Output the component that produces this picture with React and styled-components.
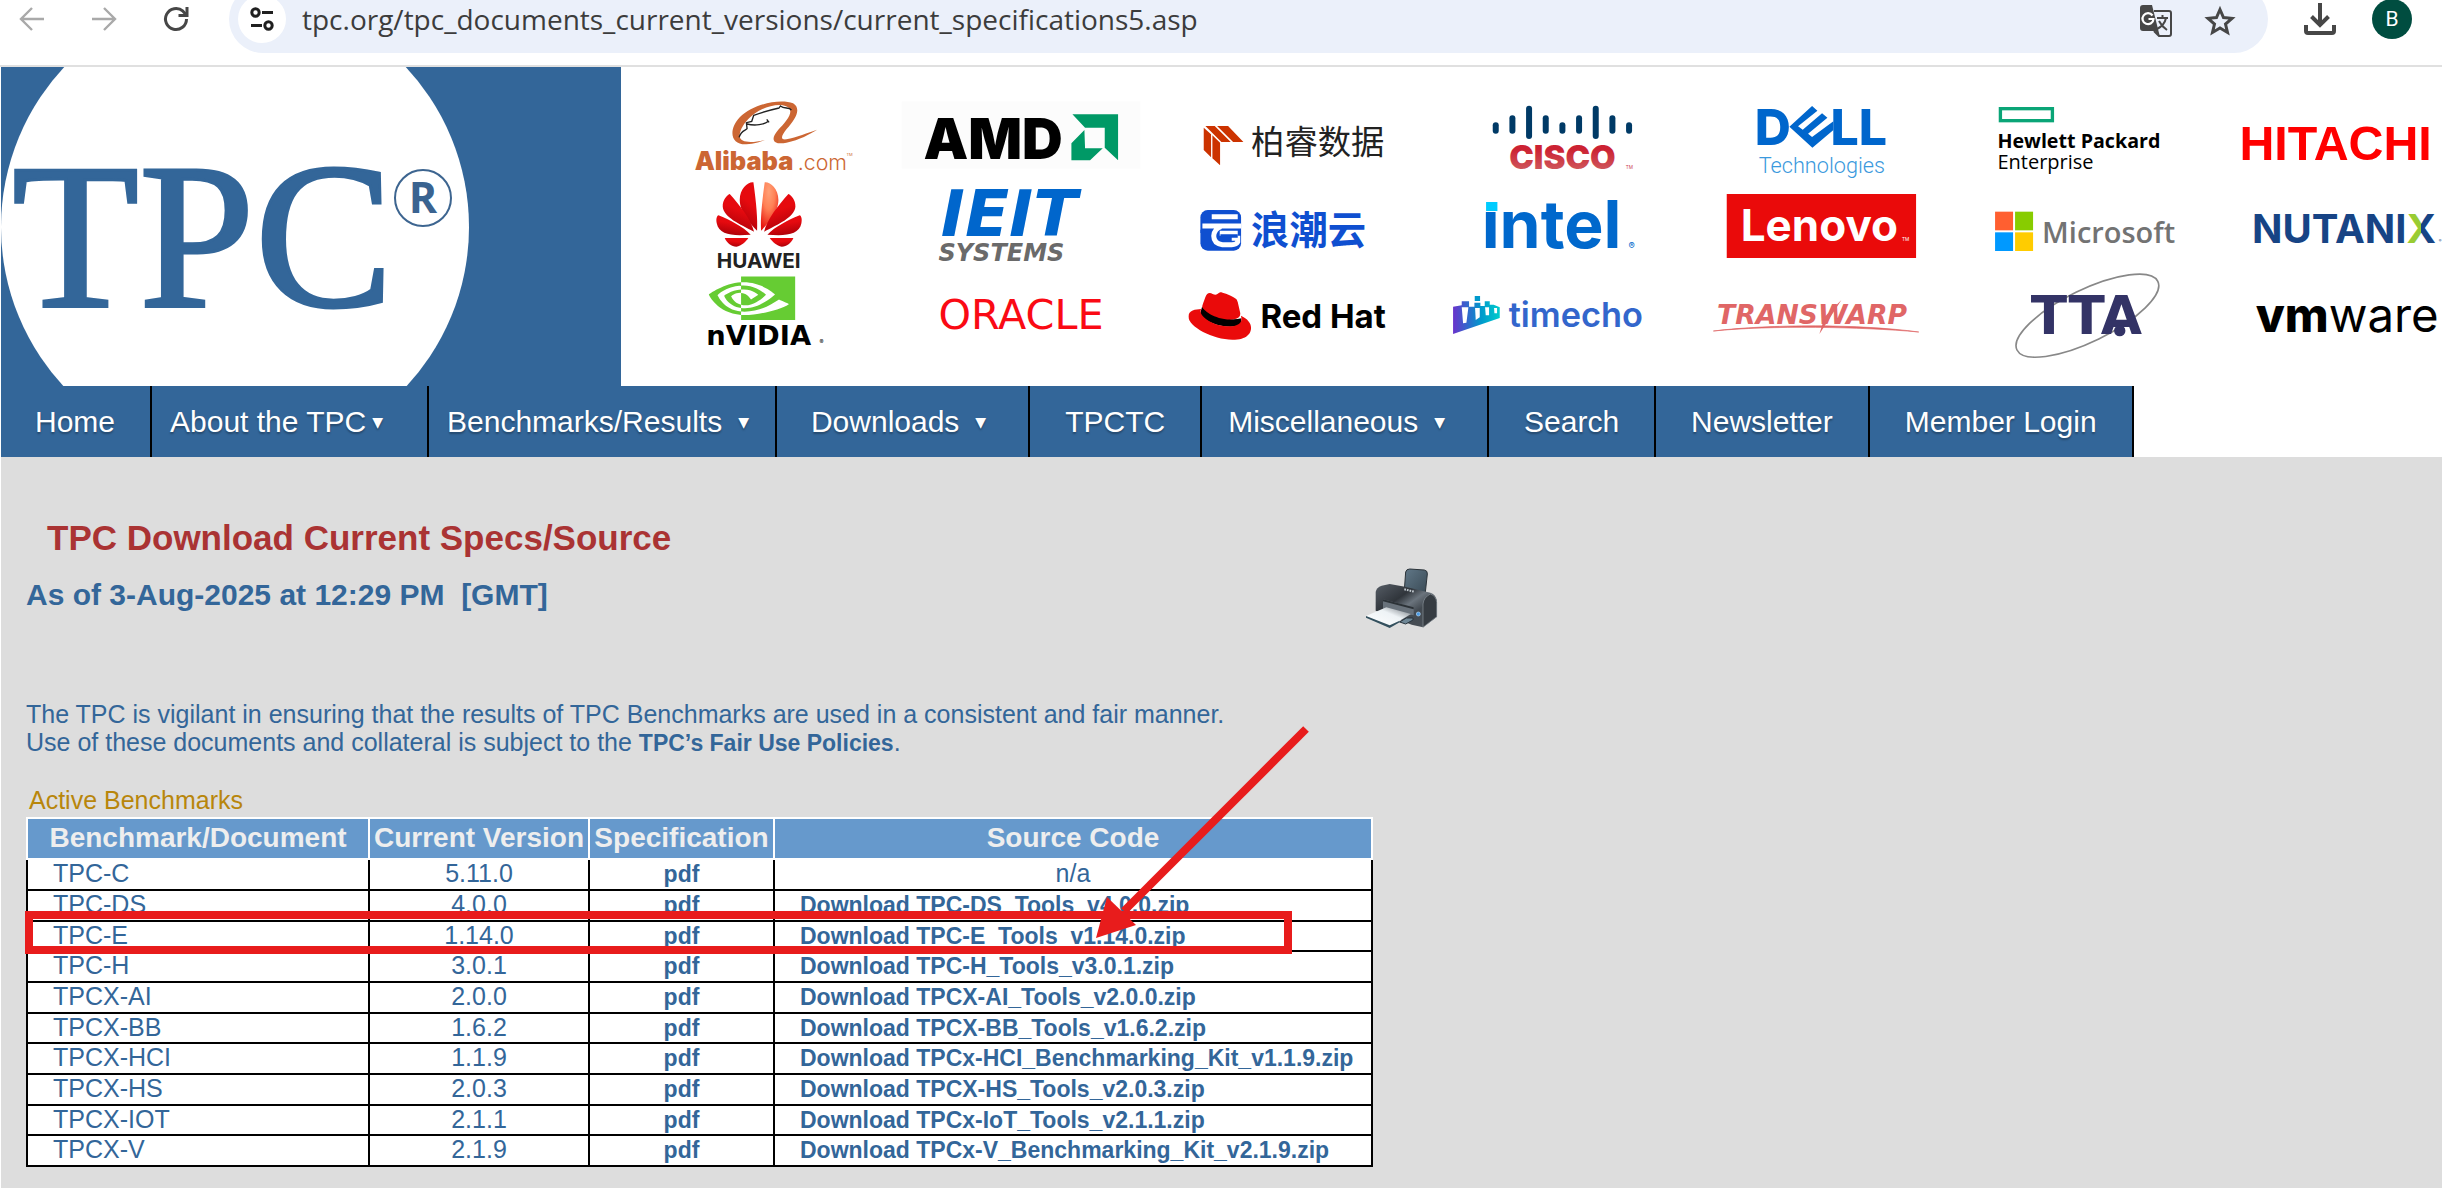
import React from 'react'
import styled, { createGlobalStyle } from 'styled-components'
import { SiNvidia, SiRedhat } from 'react-icons/si'

const navItems = [
    { label: 'Home', left: 34, right: 35 },
    { label: 'About the TPC', left: 18, right: 44, arrowGap: 6 },
    { label: 'Benchmarks/Results', left: 18, right: 26, arrowGap: 16 },
    { label: 'Downloads', left: 34, right: 42, arrowGap: 16 },
    { label: 'TPCTC', left: 35, right: 35 },
    { label: 'Miscellaneous', left: 26, right: 42, arrowGap: 16 },
    { label: 'Search', left: 35, right: 35 },
    { label: 'Newsletter', left: 35, right: 35 },
    { label: 'Member Login', left: 35, right: 35 },
]

const benchmarks = [
    { name: 'TPC-C', version: '5.11.0', source: null },
    { name: 'TPC-DS', version: '4.0.0', source: 'Download TPC-DS_Tools_v4.0.0.zip' },
    { name: 'TPC-E', version: '1.14.0', source: 'Download TPC-E_Tools_v1.14.0.zip' },
    { name: 'TPC-H', version: '3.0.1', source: 'Download TPC-H_Tools_v3.0.1.zip' },
    { name: 'TPCX-AI', version: '2.0.0', source: 'Download TPCX-AI_Tools_v2.0.0.zip' },
    { name: 'TPCX-BB', version: '1.6.2', source: 'Download TPCX-BB_Tools_v1.6.2.zip' },
    { name: 'TPCX-HCI', version: '1.1.9', source: 'Download TPCx-HCI_Benchmarking_Kit_v1.1.9.zip' },
    { name: 'TPCX-HS', version: '2.0.3', source: 'Download TPCX-HS_Tools_v2.0.3.zip' },
    { name: 'TPCX-IOT', version: '2.1.1', source: 'Download TPCx-IoT_Tools_v2.1.1.zip' },
    { name: 'TPCX-V', version: '2.1.9', source: 'Download TPCx-V_Benchmarking_Kit_v2.1.9.zip' },
]

const App = () => {
    return (
        <Page>
            <GlobalStyle />
            <BrowserBar />
            <Site>
                <Banner>
                    <BrandPanel href="#home" aria-label="TPC">
                        <TpcLogo />
                    </BrandPanel>
                    <Sponsors />
                </Banner>
                <Nav>
                    {navItems.map((item) => (
                        <NavItem key={item.label} href="#nav" $left={item.left} $right={item.right}>
                            {item.label}
                            {item.arrowGap && <NavArrow $gap={item.arrowGap}>▼</NavArrow>}
                        </NavItem>
                    ))}
                </Nav>
                <Main>
                    <TitleRow>
                        <TitleBlock>
                            <Title>TPC Download Current Specs/Source</Title>
                            <AsOf>As of 3-Aug-2025 at 12:29 PM&nbsp; [GMT]</AsOf>
                        </TitleBlock>
                        <PrintButton aria-label="Print">
                            <Printer />
                        </PrintButton>
                    </TitleRow>
                    <Intro>
                        The TPC is vigilant in ensuring that the results of TPC Benchmarks are used in a consistent and fair manner.
                        <br />
                        Use of these documents and collateral is subject to the <BoldLink href="#policies">TPC’s Fair Use Policies</BoldLink>.
                    </Intro>
                    <TableArea>
                        <SectionName>Active Benchmarks</SectionName>
                        <BenchmarkTable />
                        <Highlight />
                        <Pointer viewBox="0 0 220 220" aria-hidden="true">
                            <path d="M214 4L32 186" stroke="#e81c1c" strokeWidth="8" />
                            <path d="M4 213L15 172L44 200Z" fill="#e81c1c" />
                        </Pointer>
                    </TableArea>
                </Main>
            </Site>
        </Page>
    )
}

const BrowserBar = () => (
    <Toolbar>
        <ToolButtons>
            <IconButton aria-label="Back">
                <svg width="32" height="32" viewBox="0 0 32 32" fill="none" stroke="#a9a9a9" strokeWidth="2.4">
                    <path d="M28 16H6M16 5L5 16L16 27" />
                </svg>
            </IconButton>
            <IconButton aria-label="Forward">
                <svg width="32" height="32" viewBox="0 0 32 32" fill="none" stroke="#a9a9a9" strokeWidth="2.4">
                    <path d="M4 16H26M16 5L27 16L16 27" />
                </svg>
            </IconButton>
            <IconButton aria-label="Reload">
                <svg width="32" height="32" viewBox="0 0 32 32" fill="none" stroke="#474747" strokeWidth="3">
                    <path d="M26.5 16A10.5 10.5 0 1 1 23 8.200L26 11.500" />
                    <path d="M27 4V12.500H18.500" />
                </svg>
            </IconButton>
        </ToolButtons>
        <AddressBar>
            <SiteInfo aria-label="Site information">
                <svg width="28" height="28" viewBox="0 0 28 28" fill="none" stroke="#1f1f1f" strokeWidth="3">
                    <circle cx="7.500" cy="7.500" r="3.700" />
                    <path d="M14 7.500H25M3 20.500H14" />
                    <circle cx="20.500" cy="20.500" r="3.700" />
                </svg>
            </SiteInfo>
            <Address aria-label="Address" defaultValue="tpc.org/tpc_documents_current_versions/current_specifications5.asp" />
            <AddressActions>
                <IconButton aria-label="Translate">
                    <svg width="32" height="32" viewBox="0 0 32 32">
                        <path d="M3 0H12L20 32L15 26H3Q0 26 0 23V3Q0 0 3 0Z" fill="#474747" />
                        <path d="M14 6H29Q31 6 31 8V29Q31 31 29 31H19L14 26" fill="none" stroke="#474747" strokeWidth="2" />
                        <path d="M12.500 10.500A5.500 5.500 0 1 0 13.500 14H8.500" fill="none" stroke="#fff" strokeWidth="2.200" />
                        <path d="M17 13H28M22.500 10V13M26 13C25 18 21 22 17 24M19 16C21 20 24 23 27 25" fill="none" stroke="#474747" strokeWidth="2" />
                    </svg>
                </IconButton>
                <IconButton aria-label="Bookmark">
                    <svg width="32" height="32" viewBox="0 0 32 32" fill="none" stroke="#474747" strokeWidth="3">
                        <path d="M16 4.500L19.500 12.500L28 13.300L21.500 19L23.500 27.500L16 23L8.500 27.500L10.500 19L4 13.300L12.500 12.500Z" />
                    </svg>
                </IconButton>
            </AddressActions>
        </AddressBar>
        <IconButton aria-label="Downloads">
            <svg width="32" height="32" viewBox="0 0 32 32" fill="none" stroke="#474747" strokeWidth="4">
                <path d="M16 0V22M7.500 13.500L16 22L24.500 13.500" />
                <path d="M2 22V28Q2 30 4 30H28Q30 30 30 28V22" />
            </svg>
        </IconButton>
        <Avatar>B</Avatar>
    </Toolbar>
)

const TpcLogo = () => (
    <svg width="620" height="319" viewBox="0 0 620 319">
        <circle cx="234" cy="160" r="234" fill="#fff" />
        <text x="11" y="239" fontFamily="'Liberation Serif', serif" fontSize="208" fill="#336699" stroke="#336699" strokeWidth="3">TPC</text>
        <circle cx="422" cy="131" r="28" fill="none" stroke="#3d6590" strokeWidth="2" />
        <text x="422" y="146" textAnchor="middle" fontFamily="'Open Sans', sans-serif" fontWeight="700" fontSize="43" fill="#3a6390">R</text>
    </svg>
)

const BenchmarkTable = () => (
    <Table>
        <colgroup>
            <Col $width={342} />
            <Col $width={220} />
            <Col $width={185} />
            <Col $width={598} />
        </colgroup>
        <thead>
            <tr>
                <HeadCell>Benchmark/Document</HeadCell>
                <HeadCell>Current Version</HeadCell>
                <HeadCell>Specification</HeadCell>
                <HeadCell>Source Code</HeadCell>
            </tr>
        </thead>
        <tbody>
            {benchmarks.map((row) => (
                <Row key={row.name}>
                    <Cell>{row.name}</Cell>
                    <Cell $center>{row.version}</Cell>
                    <Cell $center><BoldLink href="#pdf">pdf</BoldLink></Cell>
                    <Cell $center={!row.source}>
                        {row.source ? <BoldLink href="#source">{row.source}</BoldLink> : 'n/a'}
                    </Cell>
                </Row>
            ))}
        </tbody>
    </Table>
)

const petals = [
    'M352 452C340 440 300 400 300 360C300 325 325 305 341 307C350 370 354 420 352 452Z',
    'M343 455C300 432 252 412 249 380C248 360 262 345 270 342C300 375 335 420 343 455Z',
    'M333 464C280 468 238 466 231 430C228 415 232 408 236 406C270 420 310 440 333 464Z',
    'M326 474L255 474C262 490 275 500 290 500C305 498 318 485 326 474Z',
]

const ciscoBars = [
    [1008, 136, 152], [1058, 115, 152], [1108, 86, 168], [1158, 115, 152], [1208, 136, 152],
    [1258, 115, 152], [1308, 86, 168], [1358, 115, 152], [1408, 136, 152],
]

// Every mark is drawn at three times its size on the strip.
const Sponsors = () => (
    <SponsorGrid>
        <Mark viewBox="-56 36 780 270">
            <path d="M375 180C335 190 300 188 300 168C300 130 360 72 425 75C475 82 445 120 415 150C385 185 410 195 440 188C480 180 510 162 532 149C505 158 470 172 440 178C420 180 425 168 440 148C470 115 485 85 460 70C420 55 340 72 300 112C265 150 272 195 320 193C345 192 362 185 375 180Z" fill="#cc6633" />
            <path d="M298 172C305 150 318 152 322 146L320 128L336 124L342 106C370 96 400 88 418 84L422 78C434 88 448 80 455 90M322 132C345 138 375 134 386 124M381 118L388 127" fill="none" stroke="#222" strokeWidth="4" />
            <text x="165" y="269" fontWeight="900" fontSize="76" fill="#cc6633">Alibaba</text>
            <text x="474" y="269" fontWeight="300" fontSize="64" fill="#cc6633">.com</text>
            <text x="620" y="228" fontSize="12" fill="#cc6633">TM</text>
        </Mark>
        <Mark viewBox="720 36 780 270">
            <rect x="782" y="64" width="716" height="202" fill="#fcfcfc" />
            <text x="847" y="237" fontWeight="900" fontSize="169" fill="#000">AMD</text>
            <path d="M1294 103H1431V241L1391 203V143H1332ZM1330 150L1291 190V241H1347L1385 205H1332Z" fill="#009966" />
        </Mark>
        <Mark viewBox="-58 36 780 270">
            <path d="M135 138H163L211 186H183ZM170 138H203L249 186H218ZM130 143L152 163V232L130 210ZM156 166L179 188V256L156 235Z" fill="#cc3300" />
            <text x="272" y="221" fontSize="100" fill="#222">柏睿数据</text>
        </Mark>
        <Mark viewBox="724 36 780 270">
            <defs>
                <linearGradient id="ciscoRed" x1="0" y1="0" x2="0" y2="1">
                    <stop offset="0.3" stopColor="#cc2233" />
                    <stop offset="1" stopColor="#d06a6a" />
                </linearGradient>
            </defs>
            {ciscoBars.map(([x, top, bottom]) => (
                <path key={x} d={`M${x} ${top}V${bottom}`} stroke="#003a66" strokeWidth="18" strokeLinecap="round" />
            ))}
            <text x="1208" y="268" textAnchor="middle" fontWeight="900" fontSize="99" fill="url(#ciscoRed)">CISCO</text>
            <text x="1398" y="267" fontSize="14" fill="#cc4455">TM</text>
        </Mark>
        <Mark viewBox="6 36 780 270">
            <text x="284" y="196" fontWeight="800" fontSize="150" fill="#0066cc">D</text>
            <path d="M388 140L456 78L472 92L414 139L428 149L486 100L502 113L444 161L456 171L520 124V150L457 203Z" fill="#0066cc" />
            <text x="511" y="196" fontWeight="800" fontSize="150" fill="#0066cc">LL</text>
            <text x="296" y="278" fontFamily="Roboto, sans-serif" fontWeight="300" fontSize="65" fill="#3a99dd">Technologies</text>
        </Mark>
        <Mark viewBox="-114 36 780 270">
            <rect x="121" y="86" width="156" height="36" fill="none" stroke="#0aa577" strokeWidth="10" />
            <text x="112" y="204" fontFamily="'Open Sans', sans-serif" fontWeight="700" fontSize="59" fill="#000">Hewlett Packard</text>
            <text x="112" y="267" fontFamily="'Open Sans', sans-serif" fontSize="60" fill="#000">Enterprise</text>
        </Mark>
        <Mark viewBox="662 36 780 270">
            <text x="834" y="240" fontFamily="'Liberation Sans', sans-serif" fontWeight="700" fontSize="145" fill="#ff0000">HITACHI</text>
        </Mark>

        <Mark viewBox="-56 306 780 270">
            <defs>
                <linearGradient id="petalRed" x1="0.6" y1="0" x2="0.3" y2="1">
                    <stop offset="0.4" stopColor="#e60a0f" />
                    <stop offset="1" stopColor="#a80008" />
                </linearGradient>
                <radialGradient id="petalGlow" cx="0.55" cy="0.2" r="0.8">
                    <stop offset="0" stopColor="#ffa077" />
                    <stop offset="0.45" stopColor="#ff8055" />
                    <stop offset="1" stopColor="#e8150f" />
                </radialGradient>
            </defs>
            {petals.map((d) => <path key={d} d={d} fill="url(#petalRed)" />)}
            <g transform="matrix(-1 0 0 1 716 0)">
                {petals.map((d, i) => <path key={d} d={d} fill={i === 0 ? 'url(#petalGlow)' : 'url(#petalRed)'} />)}
            </g>
            <text x="357" y="563" textAnchor="middle" fontWeight="700" fontSize="62" fill="#222">HUAWEI</text>
        </Mark>
        <Mark viewBox="720 306 780 270">
            <text x="1104" y="469" textAnchor="middle" fontFamily="'DejaVu Sans', sans-serif" fontWeight="700" fontStyle="italic" fontSize="194" fill="#0066cc">IEIT</text>
            <text x="1081" y="543" textAnchor="middle" fontFamily="'DejaVu Sans', sans-serif" fontWeight="700" fontStyle="italic" fontSize="72" fill="#6a6a6a">SYSTEMS</text>
        </Mark>
        <Mark viewBox="-58 306 780 270">
            <rect x="120" y="390" width="122" height="122" rx="22" fill="#0f4fd0" />
            <path d="M154 410H232M126 438H242M232 460H178M214 475H232V486Q228 494 214 494H186Q160 490 160 468Q162 446 182 440" fill="none" stroke="#fff" strokeWidth="15" />
            <path d="M120 454H150M180 468H232" fill="none" stroke="#0f4fd0" strokeWidth="10" />
            <text x="272" y="493" fontWeight="700" fontSize="115" fill="#0f4fd0">浪潮云</text>
        </Mark>
        <Mark viewBox="724 306 780 270">
            <text x="966" y="505" fontWeight="700" fontSize="198" fill="#0068cc">intel</text>
            <rect x="970" y="340" width="52" height="56" fill="#fff" />
            <rect x="979" y="366" width="34" height="27" fill="#00ccff" />
            <text x="1406" y="507" fontSize="28" fill="#0068cc">®</text>
        </Mark>
        <Mark viewBox="6 306 780 270">
            <rect x="200" y="342" width="568" height="192" fill="#ea0a0a" />
            <text x="242" y="482" fontWeight="700" fontSize="132" fill="#fff">Lenovo</text>
            <text x="726" y="482" fontSize="14" fill="#fff">TM</text>
        </Mark>
        <Mark viewBox="-114 306 780 270">
            <rect x="105" y="395" width="54" height="56" fill="#ff5f30" />
            <rect x="165" y="395" width="54" height="56" fill="#88cc00" />
            <rect x="105" y="457" width="54" height="56" fill="#0099ff" />
            <rect x="165" y="457" width="54" height="56" fill="#ffcc00" />
            <text x="246" y="488" fontFamily="'Open Sans', sans-serif" fontWeight="600" fontSize="87" fill="#737373">Microsoft</text>
        </Mark>
        <Mark viewBox="662 306 780 270">
            <defs>
                <linearGradient id="nutanixX" gradientUnits="userSpaceOnUse" x1="1334" y1="0" x2="1418" y2="0">
                    <stop offset="0.55" stopColor="#99cc33" />
                    <stop offset="0.55" stopColor="#174485" />
                </linearGradient>
            </defs>
            <text x="872" y="490" fontWeight="700" fontSize="120" fill="#174485">
                NUTANI<tspan fill="url(#nutanixX)">X</tspan>
            </text>
            <text x="1432" y="487" fontSize="12" fill="#174485">®</text>
        </Mark>

        <Mark viewBox="-56 576 780 270">
            <g transform="translate(0 157) scale(1 0.76)">
                <SiNvidia x="207" y="525" size={260} color="#66cc33" />
            </g>
            <text x="357" y="795" textAnchor="middle" fontFamily="'DejaVu Sans', sans-serif" fontWeight="700" fontSize="82" fill="#000">nVIDIA</text>
            <text x="539" y="793" fontSize="18" fill="#000">®</text>
        </Mark>
        <Mark viewBox="720 576 780 270">
            <text x="1140" y="748" textAnchor="middle" fontFamily="'DejaVu Sans', sans-serif" fontSize="124" fill="#fa0a14">ORACLE</text>
        </Mark>
        <Mark viewBox="-58 576 780 270">
            <path d="M125 680C150 705 200 725 243 715V735C200 750 140 730 118 705Z" fill="#000" />
            <SiRedhat x="84" y="614" size={188} color="#ea0a0a" />
            <text x="300" y="745" fontWeight="700" fontSize="99" fill="#000">Red Hat</text>
        </Mark>
        <Mark viewBox="724 576 780 270">
            <defs>
                <linearGradient id="timecho" x1="0" x2="1">
                    <stop offset="0" stopColor="#6a33cc" />
                    <stop offset="0.3" stopColor="#3366cc" />
                    <stop offset="0.6" stopColor="#0099cc" />
                    <stop offset="1" stopColor="#00cccc" />
                </linearGradient>
            </defs>
            <path d="M880 680L906 676V664H928V680H944V668H962V648V678H975V664H990V674H1002L1020 682V714L880 762Z" fill="url(#timecho)" />
            <path d="M906 682H926L920 728L910 730ZM946 684H960V712L948 720ZM976 682H988V706H978ZM1003 684H1012V700H1004Z" fill="#fff" />
            <rect x="945" y="648" width="16" height="15" fill="#0099cc" />
            <text x="1047" y="741" fontWeight="600" fontSize="103" fill="#3366cc">timecho</text>
        </Mark>
        <Mark viewBox="6 576 780 270">
            <text x="456" y="733" textAnchor="middle" fontFamily="'DejaVu Sans', sans-serif" fontWeight="700" fontStyle="italic" fontSize="80" fill="#e06666">TRANSWARP</text>
            <path d="M160 753C330 732 600 732 776 756C600 740 330 736 160 753Z" fill="#e06666" stroke="#e06666" strokeWidth="2" />
            <path d="M544 660L478 762L494 710Z" fill="#e06666" />
        </Mark>
        <Mark viewBox="-114 576 780 270">
            <ellipse cx="382" cy="707" rx="235" ry="78" transform="rotate(-26 382 707)" fill="none" stroke="#888" strokeWidth="5" />
            <text x="379" y="762" textAnchor="middle" fontFamily="'DejaVu Sans', sans-serif" fontWeight="700" fontSize="160" fill="#333366">TTA</text>
            <circle cx="479" cy="752" r="17" fill="#333366" />
        </Mark>
        <Mark viewBox="666 576 780 270">
            <text x="887" y="757" fontWeight="800" fontSize="142" fill="#000">
                vm<tspan fontWeight="400">ware</tspan>
            </text>
        </Mark>
    </SponsorGrid>
)

const Printer = () => (
    <svg width="74" height="62" viewBox="0 0 222 186">
        <defs>
            <linearGradient id="printerBody" x1="0" y1="0" x2="1" y2="1">
                <stop offset="0" stopColor="#565d66" />
                <stop offset="0.35" stopColor="#30353b" />
                <stop offset="0.5" stopColor="#6b747d" />
                <stop offset="0.65" stopColor="#434a51" />
                <stop offset="1" stopColor="#4a5159" />
            </linearGradient>
            <linearGradient id="printerTray" x1="0" y1="0" x2="1" y2="1">
                <stop offset="0" stopColor="#617888" />
                <stop offset="1" stopColor="#384853" />
            </linearGradient>
            <linearGradient id="printerPaper" x1="1" y1="0" x2="0" y2="1">
                <stop offset="0.1" stopColor="#8a9096" />
                <stop offset="0.4" stopColor="#eef3f6" />
                <stop offset="1" stopColor="#fff" />
            </linearGradient>
        </defs>
        <path d="M118 66L122 12Q124 3 134 3L178 6Q188 8 187 18L180 82Z" fill="url(#printerTray)" stroke="#2b3339" strokeWidth="3" />
        <path d="M32 72Q34 58 50 53L74 48L120 56L196 74Q214 80 216 102V146L174 178L140 170L32 128Z" fill="url(#printerBody)" />
        <path d="M54 94L146 118V142L54 126Z" fill="#69727b" />
        <path d="M54 94L146 118V124L54 100Z" fill="#2c3237" />
        <path d="M174 108Q176 88 196 78Q214 84 215 104V146L174 178Z" fill="#363c42" stroke="#8b949c" strokeWidth="2" />
        <path d="M104 162L122 168L144 156V150L124 150Z" fill="#6f8796" stroke="#2a353e" strokeWidth="3" />
        <path d="M3 144L64 118L138 138L74 176Z" fill="url(#printerPaper)" />
        <path d="M3 144L74 172L104 158V163L74 180L3 149Z" fill="#33505e" />
        <circle cx="160" cy="138" r="6" fill="#4a9be6" stroke="#b5d8f5" strokeWidth="2" />
        <path d="M118 64L148 71" stroke="#c4ccd2" strokeWidth="6" strokeDasharray="5 3" />
    </svg>
)

const GlobalStyle = createGlobalStyle`
    body {
        margin: 0;
        background: #fff;
        font-family: 'Liberation Sans', Arial, sans-serif;
    }
    button {
        border: 0;
        padding: 0;
        background: none;
        cursor: pointer;
    }
    a {
        color: inherit;
        text-decoration: none;
    }
`

const Page = styled.div`
    display: flex;
    flex-direction: column;
    min-height: 100vh;
`
const Toolbar = styled.header`
    display: flex;
    align-items: flex-start;
    height: 65px;
    padding: 0 30px 0 16px;
    overflow: hidden;
    border-bottom: 2px solid #e0e0e0;
`
const ToolButtons = styled.div`
    display: flex;
    gap: 40px;
`
const IconButton = styled.button`
    flex: 0 0 auto;
    display: flex;
    width: 32px;
    height: 32px;
    margin-top: 3px;
`
const AddressBar = styled.div`
    flex: 1 1 0%;
    display: flex;
    align-items: center;
    height: 68px;
    margin: -15px 36px 0 37px;
    padding: 0 32px 0 9px;
    box-sizing: border-box;
    border-radius: 34px;
    background: #ebf0fa;
`
const SiteInfo = styled.button`
    display: flex;
    align-items: center;
    justify-content: center;
    width: 48px;
    height: 48px;
    border-radius: 50%;
    background: #fff;
`
const Address = styled.input`
    flex: 1 1 0%;
    padding: 0 16px;
    border: 0;
    outline: 0;
    background: none;
    color: #3c3c3c;
    font-family: 'Open Sans', sans-serif;
    font-size: 28px;
`
const AddressActions = styled.div`
    display: flex;
    align-items: center;
    gap: 32px;
`
const Avatar = styled.button`
    flex: 0 0 auto;
    width: 40px;
    height: 40px;
    margin: -1px 0 0 36px;
    border-radius: 50%;
    background: #004d40;
    color: #fff;
    font-family: Roboto, sans-serif;
    font-size: 21px;
`
const Site = styled.div`
    flex: 1 0 auto;
    display: flex;
    flex-direction: column;
    margin-left: 1px;
`
const Banner = styled.div`
    display: flex;
    overflow: hidden;
`
const BrandPanel = styled.a`
    flex: 0 0 auto;
    display: flex;
    background: #336699;
`
const SponsorGrid = styled.div`
    flex: 1 1 0%;
    display: grid;
    grid-template-columns: repeat(7, 1fr);
    align-content: center;
`
const Mark = styled.svg`
    width: 100%;
    height: 90px;
    overflow: visible;
    font-family: Inter, 'Noto Sans CJK SC', sans-serif;
`
const Nav = styled.nav`
    display: flex;
    height: 71px;
`
const NavItem = styled.a`
    display: flex;
    align-items: center;
    padding: 0 ${({ $right }) => $right}px 0 ${({ $left }) => $left}px;
    border-right: 2px solid #000;
    background: #336699;
    color: #fff;
    font-size: 30px;
    white-space: nowrap;
    text-shadow: 0 2px 2px rgba(0, 0, 0, 0.3);
`
const NavArrow = styled.span`
    margin-left: ${({ $gap }) => $gap}px;
    font-family: 'DejaVu Sans', sans-serif;
    font-size: 14px;
`
const Main = styled.main`
    flex: 1 0 auto;
    padding: 61px 25px 0;
    background: #ddd;
    color: #336699;
`
const TitleRow = styled.div`
    display: flex;
    align-items: flex-end;
`
const TitleBlock = styled.div`
    flex: 0 0 56%;
`
const Title = styled.h1`
    margin: 0 0 20px 21px;
    color: #aa3333;
    font-size: 35px;
    line-height: 40px;
`
const AsOf = styled.h2`
    margin: 0;
    font-size: 30px;
    line-height: 34px;
`
const PrintButton = styled.button`
    display: flex;
    margin-bottom: -18px;
`
const Intro = styled.p`
    margin: 88px 0 30px;
    font-size: 25px;
    line-height: 28px;
`
const BoldLink = styled.a`
    font-size: 23px;
    font-weight: bold;
    line-height: 1;
`
const TableArea = styled.div`
    position: relative;
`
const SectionName = styled.div`
    padding: 0 0 3px 3px;
    color: #b8860b;
    font-size: 25px;
    line-height: 28px;
`
const Table = styled.table`
    border-collapse: collapse;
    background: #fff;
`
const Col = styled.col`
    width: ${({ $width }) => $width}px;
`
const HeadCell = styled.th`
    padding: 2px 0 3px;
    border: 2px solid #fff;
    background: #6699cc;
    color: #eee;
    font-size: 28px;
    line-height: 34px;
`
const Row = styled.tr`
    height: 31px;

    &:nth-child(3n) {
        height: 30px;
    }
`
const Cell = styled.td`
    padding: ${({ $center }) => $center ? '0 0 2px' : '0 0 2px 25px'};
    border: 2px solid #000;
    font-size: 25px;
    line-height: 26px;
    text-align: ${({ $center }) => $center ? 'center' : 'left'};
    vertical-align: top;
`
const Highlight = styled.div`
    position: absolute;
    left: -1px;
    top: 125px;
    width: 1267px;
    height: 43px;
    box-sizing: border-box;
    border: 8px solid #e81c1c;
`
const Pointer = styled.svg`
    position: absolute;
    left: 1066px;
    top: -61px;
    width: 220px;
    height: 220px;
`

export default App
